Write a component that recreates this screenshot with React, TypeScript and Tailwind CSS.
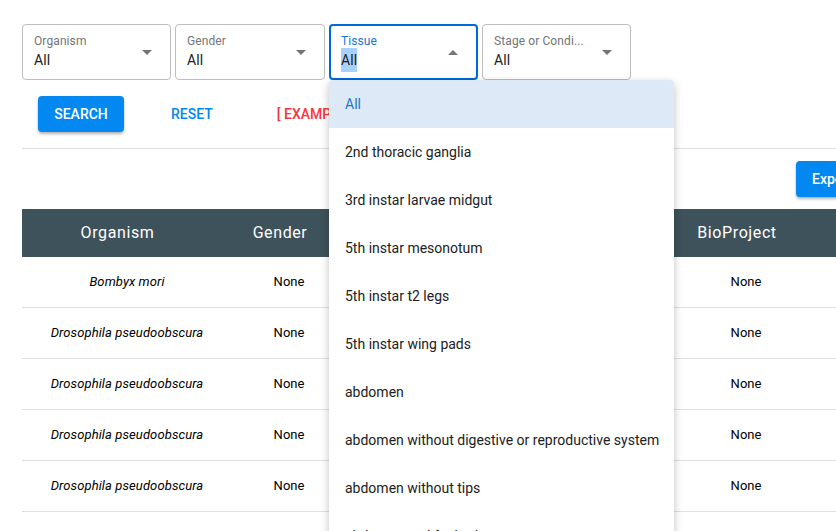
const filters = [
  { label: 'Organism', width: 'w-[149px]' },
  { label: 'Gender', width: 'w-[150px]' },
  { label: 'Tissue', width: 'w-[149px]', open: true },
  { label: 'Stage or Condi...', width: 'w-[149px]' },
]

const tissues = [
  'All',
  '2nd thoracic ganglia',
  '3rd instar larvae midgut',
  '5th instar mesonotum',
  '5th instar t2 legs',
  '5th instar wing pads',
  'abdomen',
  'abdomen without digestive or reproductive system',
  'abdomen without tips',
  'abdomen and fat body',
]

const rows = [
  'Bombyx mori',
  'Drosophila pseudoobscura',
  'Drosophila pseudoobscura',
  'Drosophila pseudoobscura',
  'Drosophila pseudoobscura',
]

function Caret({ up }: { up?: boolean }) {
  return (
    <svg width="10" height="5" viewBox="0 0 10 5" className={up ? 'rotate-180' : ''}>
      <path d="M0 0h10L5 5z" fill="#757575" />
    </svg>
  )
}

function FilterSelect({ label, width, open }: { label: string; width: string; open?: boolean }) {
  return (
    <div
      className={`${width} h-[56px] rounded flex items-center justify-between ${
        open ? 'border-2 border-[#0069d9] pl-[10px] pr-[18px]' : 'border border-[#bdbdbd] pl-[11px] pr-[18px]'
      }`}
    >
      <div className="flex flex-col mt-[2px]">
        <span className={`text-xs leading-[14px] tracking-[0.1px] ${open ? 'text-[#1976d2]' : 'text-[#757575]'}`}>
          {label}
        </span>
        <span className="text-sm leading-[24px] h-[24px] text-[#212121] tracking-[0.1px]">
          <span className={open ? 'inline-block h-[24px] bg-[#a8d1ff]' : 'inline-block h-[24px]'}>All</span>
        </span>
      </div>
      <Caret up={open} />
    </div>
  )
}

export default function App() {
  return (
    <div className="relative w-[836px] h-[531px] overflow-hidden bg-white font-['Roboto',sans-serif]">
      <div className="flex gap-1 pt-6 pl-[22px]">
        {filters.map((f) => (
          <FilterSelect key={f.label} {...f} />
        ))}
      </div>

      <div className="flex items-center mt-4 ml-[22px] pl-4 h-[36px]">
        <button className="w-[86px] h-[36px] rounded bg-[#0288f0] text-white text-sm font-medium shadow-[0_2px_3px_rgba(0,0,0,0.3)]">
          SEARCH
        </button>
        <button className="ml-[47px] text-sm font-medium text-[#0288f0]">RESET</button>
        <button className="ml-[64px] text-sm font-medium text-[#f9353d] whitespace-nowrap">[ EXAMPLE ]</button>
      </div>

      <div className="ml-[22px] mt-4 border-t border-[#e0e0e0]" />

      <div className="flex justify-end mt-3 h-[36px] -mr-[40px]">
        <button className="w-[80px] h-[36px] rounded bg-[#0288f0] text-white text-sm font-medium text-left pl-4 shadow-[0_2px_3px_rgba(0,0,0,0.3)]">
          Export
        </button>
      </div>

      <div className="ml-[22px] mt-3 w-[814px]">
        <div className="flex h-[48px] items-center bg-[#3e525b] text-white text-base tracking-[0.6px]">
          <div className="w-[210px] pr-[19px] text-center">Organism</div>
          <div className="w-[114px] pr-[18px] text-center">Gender</div>
          <div className="flex-1" />
          <div className="w-[162px] pr-[36px] text-center">BioProject</div>
        </div>
        {rows.map((name, i) => (
          <div key={i} className="flex h-[51px] items-center border-b border-[#e0e0e0] text-[13px] text-black">
            <div className="w-[210px] text-center italic tracking-[0.1px]">{name}</div>
            <div className="w-[114px] text-center">None</div>
            <div className="flex-1" />
            <div className="w-[162px] pr-[18px] text-center">None</div>
          </div>
        ))}
      </div>

      <ul className="absolute left-[329px] top-[80px] w-[345px] bg-white rounded shadow-[0_3px_8px_rgba(0,0,0,0.25)] text-sm text-[#212121]">
        {tissues.map((t, i) => (
          <li
            key={t}
            className={`h-[48px] flex items-center px-4 whitespace-nowrap ${
              i === 0 ? 'bg-[#dde9f6] text-[#1976d2] rounded-t' : ''
            }`}
          >
            {t}
          </li>
        ))}
      </ul>
    </div>
  )
}
